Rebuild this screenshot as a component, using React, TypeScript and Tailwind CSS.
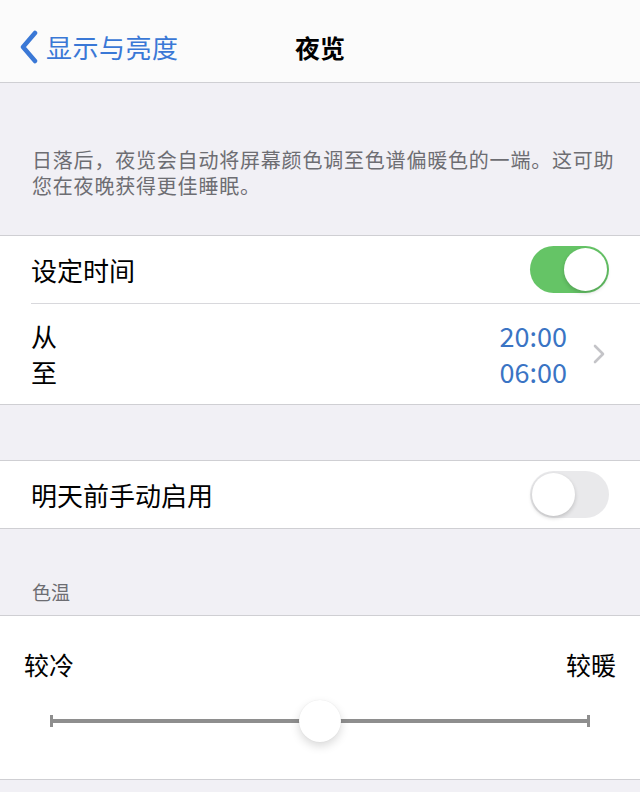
import React from "react";

const font = { fontFamily: '"Noto Sans CJK SC", "Noto Sans", sans-serif' };

function Toggle({ on }: { on: boolean }) {
  return (
    <div
      className={`w-[79px] h-[47px] rounded-full p-[2px] flex ${
        on ? "bg-[#65c466] justify-end" : "bg-[#e9e9eb] justify-start"
      }`}
    >
      <div className="w-[43px] h-[43px] rounded-full bg-white shadow-[0_2px_4px_rgba(0,0,0,0.18)]" />
    </div>
  );
}

export default function App() {
  return (
    <div className="w-[640px] h-[792px] bg-[#f1f0f5] overflow-hidden" style={font}>
      {/* Nav */}
      <div className="relative h-[83px] bg-[#fbfbfb] border-b border-[#cfcfd3] flex items-center pt-[12px]">
        <div className="flex items-center pl-[19px]">
          <svg width="20" height="34" viewBox="0 0 20 34" className="mr-[7px]">
            <path d="M16 3 L4 17 L16 31" fill="none" stroke="#3a78d6" strokeWidth="4.5" strokeLinecap="round" strokeLinejoin="round" />
          </svg>
          <span className="text-[26px] text-[#3a78d6] leading-none tracking-[0.5px]">显示与亮度</span>
        </div>
        <div className="absolute left-0 right-0 top-[12px] h-[70px] flex items-center justify-center pointer-events-none">
          <span className="text-[25px] font-bold text-black leading-none">夜览</span>
        </div>
      </div>

      {/* Description */}
      <div className="h-[152px] pt-[64px] pl-[32px] pr-[4px]">
        <p className="text-[20px] leading-[26px] tracking-[0.8px] text-[#6d6d72] whitespace-nowrap">
          日落后，夜览会自动将屏幕颜色调至色谱偏暖色的一端。这可助
          <br />
          您在夜晚获得更佳睡眠。
        </p>
      </div>

      {/* Schedule section */}
      <div className="bg-white border-t border-b border-[#cfcfd3]">
        <div className="h-[67px] flex items-center justify-between pl-[31px] pr-[31px]">
          <span className="text-[26px] text-black">设定时间</span>
          <Toggle on />
        </div>
        <div className="ml-[31px] h-px bg-[#d8d8dc]" />
        <div className="h-[100px] flex items-center pl-[31px] pr-[34px]">
          <div className="flex flex-col text-[26px] leading-[36px] text-black">
            <span>从</span>
            <span>至</span>
          </div>
          <div className="flex-1" />
          <div className="flex flex-col items-end text-[27px] leading-[36px] text-[#3a74c4]">
            <span>20:00</span>
            <span>06:00</span>
          </div>
          <svg width="14" height="20" viewBox="0 0 14 20" className="ml-[25px]">
            <path d="M3 2 L11 10 L3 18" fill="none" stroke="#c4c4c8" strokeWidth="2.6" strokeLinecap="round" strokeLinejoin="round" />
          </svg>
        </div>
      </div>

      <div className="h-[55px]" />

      {/* Manual */}
      <div className="bg-white border-t border-b border-[#cfcfd3]">
        <div className="h-[67px] flex items-center justify-between pl-[31px] pr-[31px]">
          <span className="text-[26px] text-black">明天前手动启用</span>
          <Toggle on={false} />
        </div>
      </div>

      {/* Color temperature */}
      <div className="h-[86px] pt-[50px] px-[32px]">
        <span className="text-[19px] leading-[26px] text-[#6d6d72]">色温</span>
      </div>
      <div className="bg-white border-t border-b border-[#cfcfd3] h-[165px] px-[24px] pt-[30px]">
        <div className="flex justify-between text-[25px] leading-[36px] text-black">
          <span>较冷</span>
          <span>较暖</span>
        </div>
        <div className="relative mx-[26px] mt-[18px] h-[42px] flex items-center">
          <div className="w-[3px] h-[12px] bg-[#8e8e8e]" />
          <div className="flex-1 h-[4px] bg-[#8e8e8e]" />
          <div className="w-[3px] h-[12px] bg-[#8e8e8e]" />
          <div className="absolute left-1/2 top-0 -ml-[21px] w-[42px] h-[42px] rounded-full bg-white shadow-[0_4px_10px_rgba(0,0,0,0.15),0_0_1px_rgba(0,0,0,0.1)]" />
        </div>
      </div>
    </div>
  );
}
